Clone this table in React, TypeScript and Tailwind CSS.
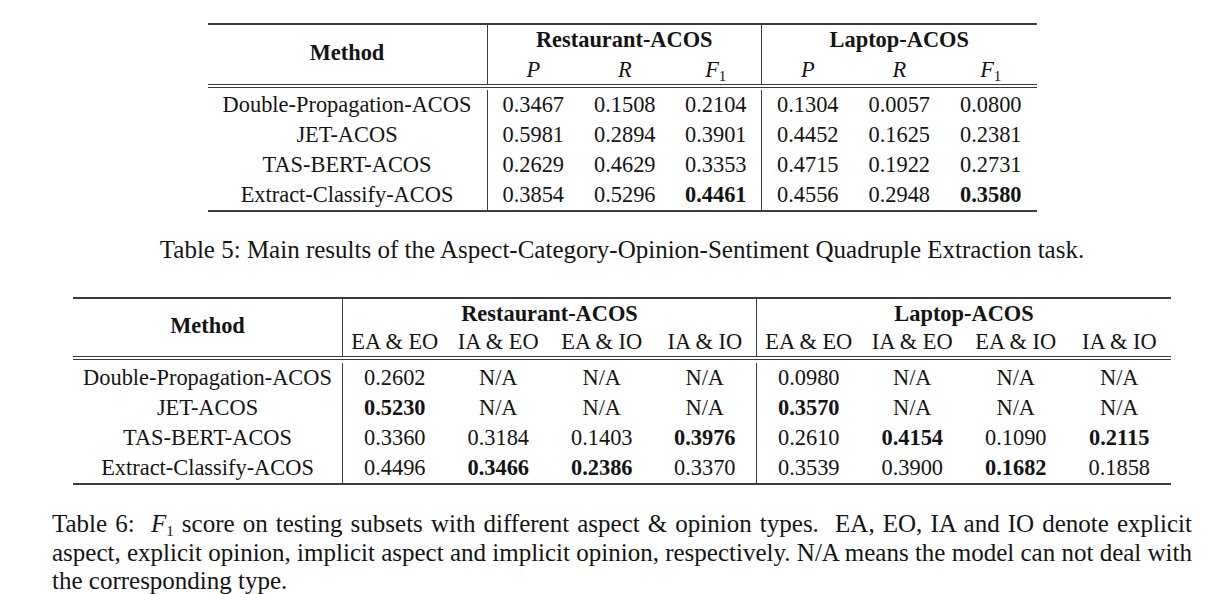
const serif = "font-['Liberation_Serif','Times_New_Roman',serif]";

type Cell = { v: string; b?: boolean };

const rows1: { name: string; cells: Cell[] }[] = [
  { name: "Double-Propagation-ACOS", cells: [{ v: "0.3467" }, { v: "0.1508" }, { v: "0.2104" }, { v: "0.1304" }, { v: "0.0057" }, { v: "0.0800" }] },
  { name: "JET-ACOS", cells: [{ v: "0.5981" }, { v: "0.2894" }, { v: "0.3901" }, { v: "0.4452" }, { v: "0.1625" }, { v: "0.2381" }] },
  { name: "TAS-BERT-ACOS", cells: [{ v: "0.2629" }, { v: "0.4629" }, { v: "0.3353" }, { v: "0.4715" }, { v: "0.1922" }, { v: "0.2731" }] },
  { name: "Extract-Classify-ACOS", cells: [{ v: "0.3854" }, { v: "0.5296" }, { v: "0.4461", b: true }, { v: "0.4556" }, { v: "0.2948" }, { v: "0.3580", b: true }] },
];

const rows2: { name: string; cells: Cell[] }[] = [
  { name: "Double-Propagation-ACOS", cells: [{ v: "0.2602" }, { v: "N/A" }, { v: "N/A" }, { v: "N/A" }, { v: "0.0980" }, { v: "N/A" }, { v: "N/A" }, { v: "N/A" }] },
  { name: "JET-ACOS", cells: [{ v: "0.5230", b: true }, { v: "N/A" }, { v: "N/A" }, { v: "N/A" }, { v: "0.3570", b: true }, { v: "N/A" }, { v: "N/A" }, { v: "N/A" }] },
  { name: "TAS-BERT-ACOS", cells: [{ v: "0.3360" }, { v: "0.3184" }, { v: "0.1403" }, { v: "0.3976", b: true }, { v: "0.2610" }, { v: "0.4154", b: true }, { v: "0.1090" }, { v: "0.2115", b: true }] },
  { name: "Extract-Classify-ACOS", cells: [{ v: "0.4496" }, { v: "0.3466", b: true }, { v: "0.2386", b: true }, { v: "0.3370" }, { v: "0.3539" }, { v: "0.3900" }, { v: "0.1682", b: true }, { v: "0.1858" }] },
];

function F1() {
  return (
    <span>
      <i>F</i>
      <sub className="text-[15px] not-italic">1</sub>
    </span>
  );
}

function DoubleRule() {
  return (
    <div>
      <div className="h-px bg-[#3c3c3c]" />
      <div className="h-[2px]" />
      <div className="h-px bg-[#3c3c3c]" />
    </div>
  );
}

function Table5() {
  const subs = [<i key="p">P</i>, <i key="r">R</i>, <F1 key="f" />];
  return (
    <div className="mx-auto w-[829px]">
      <div className="h-[2px] bg-[#3c3c3c]" />
      <div className="grid grid-cols-[280px_repeat(6,1fr)] grid-rows-[30px_29px]">
        <div className="row-span-2 flex items-center justify-center border-r border-[#3c3c3c] pb-[4px] font-bold">Method</div>
        <div className="col-span-3 border-r border-[#3c3c3c] text-center font-bold leading-[30px]">Restaurant-ACOS</div>
        <div className="col-span-3 text-center font-bold leading-[30px]">Laptop-ACOS</div>
        {[0, 1].flatMap((g) =>
          subs.map((s, i) => (
            <div
              key={`${g}-${i}`}
              className={`text-center leading-[29px] ${g === 0 && i === 2 ? "border-r border-[#3c3c3c]" : ""}`}
            >
              {s}
            </div>
          ))
        )}
      </div>
      <DoubleRule />
      <div className="grid grid-cols-[280px_repeat(6,1fr)] pt-[2px]">
        {rows1.map((r) => (
          <div key={r.name} className="contents">
            <div className="border-r border-[#3c3c3c] text-center leading-[30px]">{r.name}</div>
            {r.cells.map((c, i) => (
              <div
                key={i}
                className={`text-center leading-[30px] ${c.b ? "font-bold" : ""} ${i === 2 ? "border-r border-[#3c3c3c]" : ""}`}
              >
                {c.v}
              </div>
            ))}
          </div>
        ))}
      </div>
      <div className="h-[2px] bg-[#3c3c3c]" />
    </div>
  );
}

function Table6() {
  const subs = ["EA & EO", "IA & EO", "EA & IO", "IA & IO"];
  return (
    <div className="mx-auto w-[1098px]">
      <div className="h-[2px] bg-[#3c3c3c]" />
      <div className="grid grid-cols-[270px_repeat(8,1fr)] grid-rows-[29px_28px]">
        <div className="row-span-2 flex items-center justify-center border-r border-[#3c3c3c] pb-[4px] font-bold">Method</div>
        <div className="col-span-4 border-r border-[#3c3c3c] text-center font-bold leading-[29px]">Restaurant-ACOS</div>
        <div className="col-span-4 text-center font-bold leading-[29px]">Laptop-ACOS</div>
        {[0, 1].flatMap((g) =>
          subs.map((s, i) => (
            <div
              key={`${g}-${i}`}
              className={`text-center leading-[28px] ${g === 0 && i === 3 ? "border-r border-[#3c3c3c]" : ""}`}
            >
              {s}
            </div>
          ))
        )}
      </div>
      <DoubleRule />
      <div className="grid grid-cols-[270px_repeat(8,1fr)] pt-[3px]">
        {rows2.map((r) => (
          <div key={r.name} className="contents">
            <div className="border-r border-[#3c3c3c] text-center leading-[30px]">{r.name}</div>
            {r.cells.map((c, i) => (
              <div
                key={i}
                className={`text-center leading-[30px] ${c.b ? "font-bold" : ""} ${i === 3 ? "border-r border-[#3c3c3c]" : ""}`}
              >
                {c.v}
              </div>
            ))}
          </div>
        ))}
      </div>
      <div className="h-[2px] bg-[#3c3c3c]" />
    </div>
  );
}

export default function App() {
  return (
    <div className={`${serif} h-[594px] w-[1215px] overflow-hidden bg-white text-[22.4px] text-[#141414]`}>
      <div className="ml-[52px] w-[1140px] pt-[23px]">
        <Table5 />
        <p className="mt-[24px] whitespace-nowrap text-center text-[25px] leading-[28px]">
          Table 5: Main results of the Aspect-Category-Opinion-Sentiment Quadruple Extraction task.
        </p>
        <div className="mt-[33px]">
          <Table6 />
        </div>
        <div className="mt-[25px] text-[25px] leading-[28.5px]">
          <p className="whitespace-nowrap text-justify [text-align-last:justify]">
            Table 6:&nbsp; <F1 /> score on testing subsets with different aspect &amp; opinion types.&nbsp; EA, EO, IA and IO denote explicit
          </p>
          <p className="whitespace-nowrap text-justify [text-align-last:justify] [word-spacing:-2px]">
            aspect, explicit opinion, implicit aspect and implicit opinion, respectively. N/A means the model can not deal with
          </p>
          <p>the corresponding type.</p>
        </div>
      </div>
    </div>
  );
}
